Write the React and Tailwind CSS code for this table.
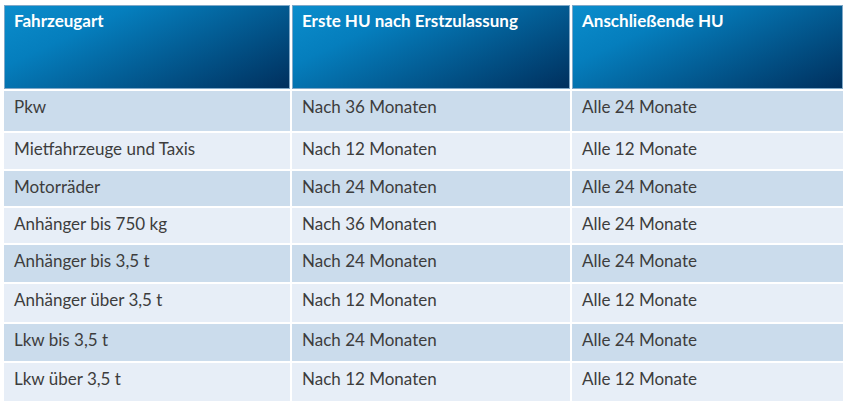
const head = ['Fahrzeugart', 'Erste HU nach Erstzulassung', 'Anschließende HU']

// [Fahrzeugart, erste HU, anschließend, row height]
const rows = [
  ['Pkw', 'Nach 36 Monaten', 'Alle 24 Monate', 'h-[40px]'],
  ['Mietfahrzeuge und Taxis', 'Nach 12 Monaten', 'Alle 12 Monate', 'h-[36px]'],
  ['Motorräder', 'Nach 24 Monaten', 'Alle 24 Monate', 'h-[35px]'],
  ['Anhänger bis 750 kg', 'Nach 36 Monaten', 'Alle 24 Monate', 'h-[35px]'],
  ['Anhänger bis 3,5 t', 'Nach 24 Monaten', 'Alle 24 Monate', 'h-[37px]'],
  ['Anhänger über 3,5 t', 'Nach 12 Monaten', 'Alle 12 Monate', 'h-[38px]'],
  ['Lkw bis 3,5 t', 'Nach 24 Monaten', 'Alle 24 Monate', 'h-[37px]'],
  ['Lkw über 3,5 t', 'Nach 12 Monaten', 'Alle 12 Monate', 'h-[38px]'],
]

export default function App() {
  return (
    <div className="h-[405px] w-[848px] bg-white pl-[4px] pt-[5px] font-['Lato',sans-serif]">
      <div className="grid w-[839px] grid-cols-[286px_278px_271px] gap-[2px] bg-white">
        {head.map((h) => (
          <div
            key={h}
            className="h-[84px] border border-[#7fa8c8] bg-[linear-gradient(155deg,#0b8dcc_0%,#057ebd_28%,#00305e_100%)] px-[9px] pt-[2px] text-[17px] font-bold text-white"
          >
            {h}
          </div>
        ))}
        {rows.map((r, i) =>
          r.slice(0, 3).map((c, j) => (
            <div
              key={i + '-' + j}
              className={`${r[3]} ${i % 2 === 0 ? 'bg-[#cbdcec]' : 'bg-[#e7eef7]'} px-[10px] pt-[3px] text-[17px] text-[#3d3d3d]`}
            >
              {c}
            </div>
          ))
        )}
      </div>
    </div>
  )
}
